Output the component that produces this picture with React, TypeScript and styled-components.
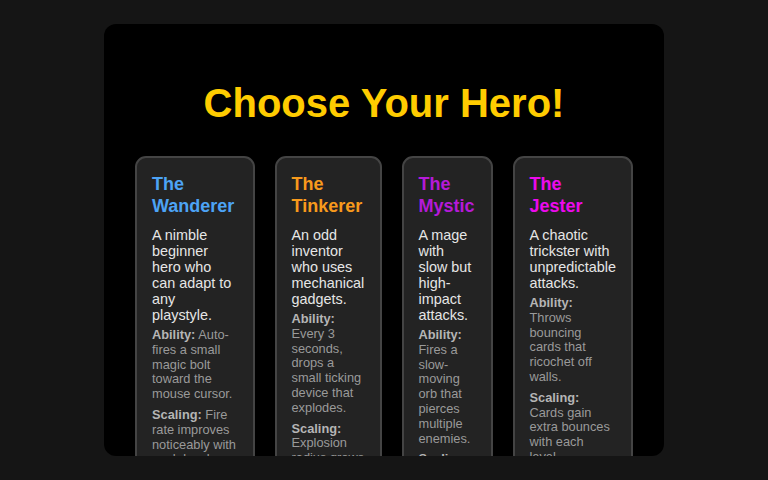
import React from "react";
import styled, { createGlobalStyle } from "styled-components";

const GlobalStyle = createGlobalStyle`
  html, body {
    margin: 0;
    padding: 0;
    background: #151515;
    font-family: "Liberation Sans", Arial, sans-serif;
  }
`;

const Page = styled.div`
  height: 480px;
  display: flex;
  justify-content: center;
  padding-top: 24px;
  box-sizing: border-box;
`;

const Panel = styled.div`
  width: 560px;
  height: 432px;
  background: #000;
  border-radius: 12px;
  overflow: hidden;
  box-sizing: border-box;
  padding: 56px 30px 0;
  display: flex;
  flex-direction: column;
  align-items: center;
`;

const Title = styled.h1`
  margin: 0 0 30px;
  font-size: 40px;
  line-height: 46px;
  font-weight: 700;
  color: #ffcc00;
  text-align: center;
`;

const CardRow = styled.div`
  display: flex;
  gap: 19.5px;
  align-items: flex-start;
`;

const Card = styled.div<{ $w: number }>`
  width: ${(p) => p.$w}px;
  flex-shrink: 0;
  box-sizing: border-box;
  background: #232323;
  border: 2px solid #444;
  border-radius: 11px;
  padding: 15px;
`;

const Name = styled.h2<{ $color: string }>`
  margin: 0 0 10px;
  font-size: 18px;
  line-height: 22px;
  font-weight: 700;
  color: ${(p) => p.$color};
`;

const Desc = styled.p`
  margin: 0 0 5px;
  font-size: 14.4px;
  line-height: 16px;
  color: #e6e6e6;
`;

const Detail = styled.p`
  margin: 0 0 6px;
  font-size: 12.8px;
  line-height: 14.8px;
  color: #9a9a9a;

  b {
    color: #b5b5b5;
  }
`;

const heroes = [
  {
    name: "The Wanderer",
    color: "#4da3f5",
    w: 120,
    desc: "A nimble beginner hero who can adapt to any playstyle.",
    ability: "Auto-fires a small magic bolt toward the mouse cursor.",
    scaling: "Fire rate improves noticeably with each level.",
  },
  {
    name: "The Tinkerer",
    color: "#f89a1c",
    w: 107.5,
    desc: "An odd inventor who uses mechanical gadgets.",
    ability: "Every 3 seconds, drops a small ticking device that explodes.",
    scaling: "Explosion radius grows with each level.",
  },
  {
    name: "The Mystic",
    color: "#b51ad8",
    w: 91.5,
    desc: "A mage with slow but high-impact attacks.",
    ability: "Fires a slow-moving orb that pierces multiple enemies.",
    scaling: "Orb size and damage increase each level.",
  },
  {
    name: "The Jester",
    color: "#ec0aec",
    w: 120.5,
    desc: "A chaotic trickster with unpredictable attacks.",
    ability: "Throws bouncing cards that ricochet off walls.",
    scaling: "Cards gain extra bounces with each level.",
  },
];

const App = () => {
  return (
    <>
      <GlobalStyle />
      <Page>
        <Panel>
          <Title>Choose Your Hero!</Title>
          <CardRow>
            {heroes.map((h) => (
              <Card key={h.name} $w={h.w}>
                <Name $color={h.color}>{h.name}</Name>
                <Desc>{h.desc}</Desc>
                <Detail>
                  <b>Ability:</b> {h.ability}
                </Detail>
                <Detail>
                  <b>Scaling:</b> {h.scaling}
                </Detail>
              </Card>
            ))}
          </CardRow>
        </Panel>
      </Page>
    </>
  );
};

export default App;
